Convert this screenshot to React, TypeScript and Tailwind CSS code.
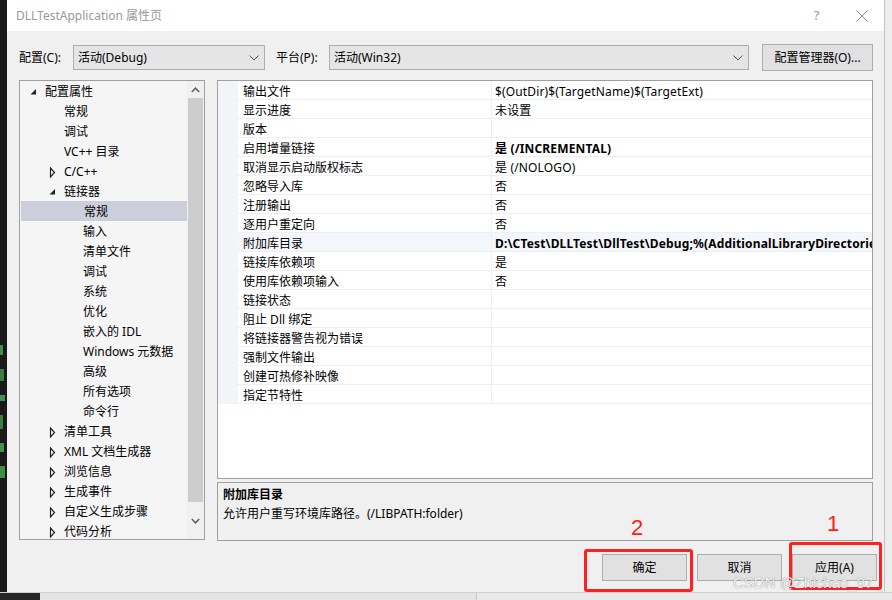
import React from "react";

type TreeItem = { label: string; level: number; arrow?: "open" | "closed"; selected?: boolean };

const treeItems: TreeItem[] = [
  { label: "配置属性", level: 0, arrow: "open" },
  { label: "常规", level: 1 },
  { label: "调试", level: 1 },
  { label: "VC++ 目录", level: 1 },
  { label: "C/C++", level: 1, arrow: "closed" },
  { label: "链接器", level: 1, arrow: "open" },
  { label: "常规", level: 2, selected: true },
  { label: "输入", level: 2 },
  { label: "清单文件", level: 2 },
  { label: "调试", level: 2 },
  { label: "系统", level: 2 },
  { label: "优化", level: 2 },
  { label: "嵌入的 IDL", level: 2 },
  { label: "Windows 元数据", level: 2 },
  { label: "高级", level: 2 },
  { label: "所有选项", level: 2 },
  { label: "命令行", level: 2 },
  { label: "清单工具", level: 1, arrow: "closed" },
  { label: "XML 文档生成器", level: 1, arrow: "closed" },
  { label: "浏览信息", level: 1, arrow: "closed" },
  { label: "生成事件", level: 1, arrow: "closed" },
  { label: "自定义生成步骤", level: 1, arrow: "closed" },
  { label: "代码分析", level: 1, arrow: "closed" },
];

const levelPad = ["pl-[10px]", "pl-[29px]", "pl-[48px]"];

type Prop = { name: string; value: string; bold?: boolean; selected?: boolean };

const props: Prop[] = [
  { name: "输出文件", value: "$(OutDir)$(TargetName)$(TargetExt)" },
  { name: "显示进度", value: "未设置" },
  { name: "版本", value: "" },
  { name: "启用增量链接", value: "是 (/INCREMENTAL)", bold: true },
  { name: "取消显示启动版权标志", value: "是 (/NOLOGO)" },
  { name: "忽略导入库", value: "否" },
  { name: "注册输出", value: "否" },
  { name: "逐用户重定向", value: "否" },
  {
    name: "附加库目录",
    value: "D:\\CTest\\DLLTest\\DllTest\\Debug;%(AdditionalLibraryDirectories)",
    bold: true,
    selected: true,
  },
  { name: "链接库依赖项", value: "是" },
  { name: "使用库依赖项输入", value: "否" },
  { name: "链接状态", value: "" },
  { name: "阻止 Dll 绑定", value: "" },
  { name: "将链接器警告视为错误", value: "" },
  { name: "强制文件输出", value: "" },
  { name: "创建可热修补映像", value: "" },
  { name: "指定节特性", value: "" },
];

function Chevron() {
  return (
    <svg width="10" height="6" viewBox="0 0 10 6" className="shrink-0">
      <path d="M0.5 0.5 L5 5 L9.5 0.5" fill="none" stroke="#555" strokeWidth="1" />
    </svg>
  );
}

function Select({ text, w }: { text: string; w: string }) {
  return (
    <div
      className={`${w} h-[25px] flex items-center justify-between pl-[4px] pr-[5px] bg-[#e5e5e5] border border-[#adadad] text-black`}
    >
      <span>{text}</span>
      <Chevron />
    </div>
  );
}

function Btn({ text, w }: { text: string; w: string }) {
  return (
    <div
      className={`${w} h-[27px] flex items-center justify-center bg-[#e1e1e1] border border-[#adadad] text-black`}
    >
      {text}
    </div>
  );
}

function TreeArrow({ kind }: { kind?: "open" | "closed" }) {
  if (kind === "open") {
    return (
      <svg width="15" height="8" viewBox="0 0 15 8" className="shrink-0">
        <polygon points="6,1 6,6.5 0.5,6.5" fill="#222" />
      </svg>
    );
  }
  if (kind === "closed") {
    return (
      <svg width="15" height="11" viewBox="0 0 15 11" className="shrink-0">
        <polygon points="1.5,1 5.5,5.5 1.5,10" fill="none" stroke="#222" strokeWidth="1.2" />
      </svg>
    );
  }
  return <span className="w-[15px] shrink-0" />;
}

export default function App() {
  const F = "font-['Noto_Sans','Noto_Sans_CJK_SC',sans-serif]";
  return (
    <div className={`${F} relative w-[892px] h-[600px] overflow-hidden flex flex-col bg-[#e6e6e6] text-[12px] text-black`}>
      <div className="flex h-[592px]">
        {/* desktop strip on the left */}
        <div className="w-[7px] bg-[#1a1a1a] flex flex-col gap-[14px] pt-[345px]">
          <div className="w-[3px] h-[10px] bg-[#3f8f47]" />
          <div className="w-[4px] h-[12px] bg-[#3a7f41]" />
          <div className="w-[5px] h-[6px] bg-[#468f4d]" />
          <div className="w-[3px] h-[14px] bg-[#3a7f41]" />
          <div className="w-[4px] h-[9px] bg-[#468f4d]" />
          <div className="w-[5px] h-[12px] bg-[#3f8f47]" />
        </div>

        {/* dialog */}
        <div className="w-[878px] flex flex-col border-r border-[#c4c4c4] bg-[#f0f0f0]">
          {/* title bar */}
          <div className="h-[31px] bg-white flex items-center justify-between">
            <span className="pl-[9px] text-[12px] text-[#999999]">DLLTestApplication 属性页</span>
            <div className="flex h-full">
              <div className="w-[45px] flex items-center justify-center text-[#999999] text-[13px]">?</div>
              <div className="w-[45px] flex items-center justify-center">
                <svg width="12" height="12" viewBox="0 0 12 12">
                  <path d="M0.5 0.5 L11.5 11.5 M11.5 0.5 L0.5 11.5" stroke="#8a8a8a" strokeWidth="1" />
                </svg>
              </div>
            </div>
          </div>

          {/* body */}
          <div className="flex-1 flex flex-col pl-[12px] pt-[13px]">
            {/* config row */}
            <div className="h-[27px] flex items-center">
              <span className="w-[54px]">配置(C):</span>
              <Select text="活动(Debug)" w="w-[192px]" />
              <span className="ml-[11px] w-[53px]">平台(P):</span>
              <Select text="活动(Win32)" w="w-[420px]" />
              <div className="ml-[13px]">
                <Btn text="配置管理器(O)..." w="w-[111px]" />
              </div>
            </div>

            {/* main area */}
            <div className="mt-[9px] h-[461px] flex gap-[12px]">
              {/* tree */}
              <div className="w-[186px] h-[460px] border border-[#a0a0a0] bg-[#f5f5f5] flex overflow-hidden">
                <div className="flex-1 flex flex-col overflow-hidden">
                  {treeItems.map((it, i) => (
                    <div
                      key={i}
                      className={`h-[20px] shrink-0 flex items-center pt-[2px] ${levelPad[it.level]} ${
                        it.selected ? "bg-[#cccedb] ml-[1px]" : ""
                      }`}
                    >
                      <TreeArrow kind={it.arrow} />
                      <span className="whitespace-nowrap">{it.label}</span>
                    </div>
                  ))}
                </div>
                <div className="w-[17px] bg-[#f0f0f0] flex flex-col items-center">
                  <div className="h-[17px] flex items-center justify-center">
                    <svg width="9" height="6" viewBox="0 0 9 6">
                      <path d="M0.8 5 L4.5 1.2 L8.2 5" fill="none" stroke="#606060" strokeWidth="1.5" />
                    </svg>
                  </div>
                  <div className="w-[15px] h-[404px] bg-[#cdcdcd]" />
                  <div className="flex-1 flex items-center justify-center">
                    <svg width="9" height="6" viewBox="0 0 9 6">
                      <path d="M0.8 1 L4.5 4.8 L8.2 1" fill="none" stroke="#606060" strokeWidth="1.5" />
                    </svg>
                  </div>
                </div>
              </div>

              {/* right column */}
              <div className="w-[656px] flex flex-col gap-[3px]">
                <div className="h-[399px] border border-[#a0a0a0] bg-white flex flex-col overflow-hidden">
                  {props.map((p, i) => (
                    <div key={i} className={`h-[19px] shrink-0 flex ${p.selected ? "bg-[#f3f6fb]" : ""}`}>
                      <div className="w-[20px] bg-[#f2f4f8]" />
                      <div className="w-[253px] border-b border-[#eeeff2] flex items-center pt-[3px] pl-[5px] whitespace-nowrap">
                        {p.name}
                      </div>
                      <div
                        className={`flex-1 border-b border-l border-[#eeeff2] flex items-center pt-[3px] pl-[3px] whitespace-nowrap overflow-hidden tracking-[0.15px] ${
                          p.bold ? "font-bold" : ""
                        }`}
                      >
                        {p.value}
                      </div>
                    </div>
                  ))}
                </div>
                <div className="h-[59px] border border-[#a0a0a0] bg-[#f0f0f0] flex flex-col pl-[5px] pt-[2px] leading-[19px]">
                  <span className="font-bold">附加库目录</span>
                  <span>允许用户重写环境库路径。(/LIBPATH:folder)</span>
                </div>
              </div>
            </div>

            {/* buttons */}
            <div className="mt-[13px] flex justify-end gap-[10px] pr-[7px]">
              <Btn text="确定" w="w-[85px]" />
              <Btn text="取消" w="w-[85px]" />
              <Btn text="应用(A)" w="w-[85px]" />
            </div>
          </div>
        </div>

        {/* right desktop strip */}
        <div className="flex-1 bg-[#ededed]" />
      </div>

      {/* bottom strip */}
      <div className="h-[8px] flex border-t border-[#d0d0d0]">
        <div className="w-[40px] bg-[#262626]" />
        <div className="w-[437px] bg-[#e4e4e4] border-r border-[#c8c8c8]" />
        <div className="flex-1 bg-[#e9e9e9]" />
      </div>

      {/* annotations */}
      <div className="absolute left-[584px] top-[549px] w-[109px] h-[43px] border-[3px] border-[#ff2020] rounded-[3px]" />
      <div className="absolute left-[789px] top-[542px] w-[93px] h-[48px] border-[3px] border-[#ff2020] rounded-[3px]" />
      <div className="absolute left-[631px] top-[515px] text-[22px] leading-[26px] text-[#ff1a1a] font-['Liberation_Sans',sans-serif]">2</div>
      <div className="absolute left-[827px] top-[511px] text-[22px] leading-[26px] text-[#ff1a1a] font-['Liberation_Sans',sans-serif]">1</div>
      <div className="absolute left-[733px] top-[573px] text-[15px] leading-[20px] text-[#f4f4f4] font-['Liberation_Sans',sans-serif] [text-shadow:0_0_1px_#666]">
        CSDN @Zhichao_97
      </div>
    </div>
  );
}
